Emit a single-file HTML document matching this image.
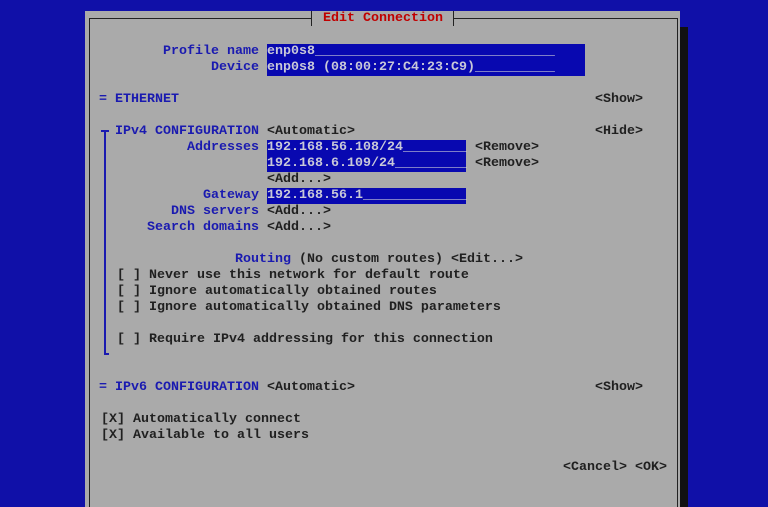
<html><head><style>
body{margin:0;width:768px;height:507px;background:#1010a8;position:relative;overflow:hidden;font-family:"Liberation Mono",monospace;font-size:13.33px;font-weight:bold}
#p{position:absolute;left:85px;top:11px;width:595px;height:496px;background:#aaaaaa}
#sh{position:absolute;left:680px;top:27px;width:8px;height:480px;background:#111}
.b{position:absolute;background:#222}
.l{position:absolute;height:16px;line-height:16px;white-space:pre;color:#202020;margin-top:2px}
.u{color:#1a1ab0}
.f{background:#0808b0;color:#c8c8d8}
.r{color:#c00000}
</style></head><body>
<div id="p"></div><div id="sh"></div>
<div class="b" style="left:89px;top:18px;width:222px;height:1px"></div>
<div class="b" style="left:453px;top:18px;width:224px;height:1px"></div>
<div class="b" style="left:89px;top:18px;width:1px;height:489px"></div>
<div class="b" style="left:677px;top:18px;width:1px;height:489px"></div>
<div class="b" style="left:311px;top:11px;width:1px;height:15px"></div>
<div class="b" style="left:453px;top:11px;width:1px;height:15px"></div>
<div class="l r" style="top:9px;left:323px">Edit Connection</div>
<div style="position:absolute;left:104px;top:130px;width:2px;height:224px;background:#1a1ab0"></div>
<div style="position:absolute;left:101px;top:130px;width:8px;height:2px;background:#1a1ab0"></div>
<div style="position:absolute;left:104px;top:353px;width:5px;height:2px;background:#1a1ab0"></div>
<div class="l u" style="top:42px;left:163px">Profile name</div>
<div class="l f" style="top:42px;left:267px;width:318px">enp0s8______________________________</div>
<div class="l u" style="top:58px;left:211px">Device</div>
<div class="l f" style="top:58px;left:267px;width:318px">enp0s8 (08:00:27:C4:23:C9)__________</div>
<div class="l u" style="top:90px;left:99px">= ETHERNET</div>
<div class="l" style="top:90px;left:595px">&lt;Show&gt;</div>
<div class="l" style="top:122px;left:115px"><span class="u">IPv4 CONFIGURATION</span> &lt;Automatic&gt;</div>
<div class="l" style="top:122px;left:595px">&lt;Hide&gt;</div>
<div class="l u" style="top:138px;left:187px">Addresses</div>
<div class="l f" style="top:138px;left:267px;width:199px">192.168.56.108/24________</div>
<div class="l" style="top:138px;left:475px">&lt;Remove&gt;</div>
<div class="l f" style="top:154px;left:267px;width:199px">192.168.6.109/24_________</div>
<div class="l" style="top:154px;left:475px">&lt;Remove&gt;</div>
<div class="l" style="top:170px;left:267px">&lt;Add...&gt;</div>
<div class="l u" style="top:186px;left:203px">Gateway</div>
<div class="l f" style="top:186px;left:267px;width:199px">192.168.56.1_____________</div>
<div class="l" style="top:202px;left:171px"><span class="u">DNS servers</span> &lt;Add...&gt;</div>
<div class="l" style="top:218px;left:147px"><span class="u">Search domains</span> &lt;Add...&gt;</div>
<div class="l" style="top:250px;left:235px"><span class="u">Routing</span> (No custom routes) &lt;Edit...&gt;</div>
<div class="l" style="top:266px;left:117px">[ ] Never use this network for default route</div>
<div class="l" style="top:282px;left:117px">[ ] Ignore automatically obtained routes</div>
<div class="l" style="top:298px;left:117px">[ ] Ignore automatically obtained DNS parameters</div>
<div class="l" style="top:330px;left:117px">[ ] Require IPv4 addressing for this connection</div>
<div class="l" style="top:378px;left:99px"><span class="u">= IPv6 CONFIGURATION</span> &lt;Automatic&gt;</div>
<div class="l" style="top:378px;left:595px">&lt;Show&gt;</div>
<div class="l" style="top:410px;left:101px">[X] Automatically connect</div>
<div class="l" style="top:426px;left:101px">[X] Available to all users</div>
<div class="l" style="top:458px;left:563px">&lt;Cancel&gt; &lt;OK&gt;</div>
</body></html>
